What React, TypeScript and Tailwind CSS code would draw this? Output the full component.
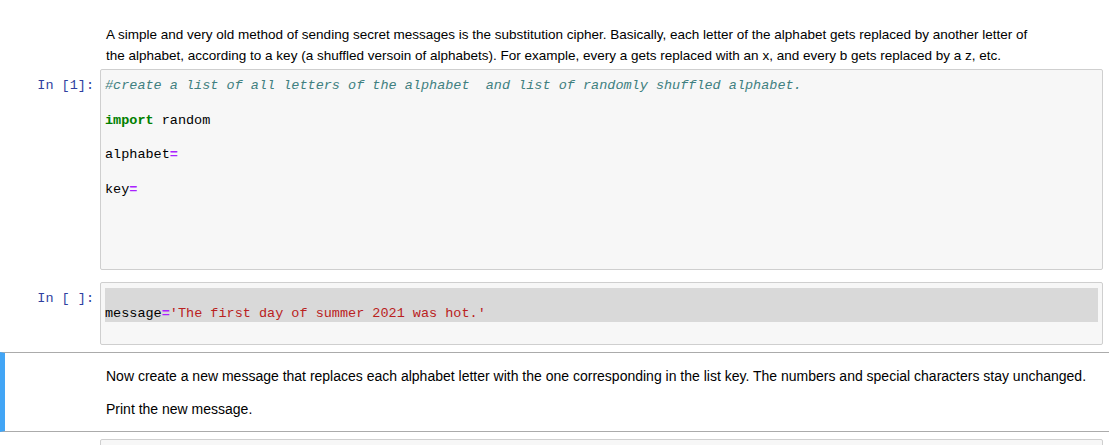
import React from "react";

const mono = "font-['Liberation_Mono',monospace] text-[13.5px] leading-[17.33px] whitespace-pre";

function Line({ children }: { children?: React.ReactNode }) {
  return <div className="h-[17.33px]">{children ?? "\u00a0"}</div>;
}

export default function App() {
  return (
    <div className="w-[1109px] h-[445px] overflow-hidden bg-white text-black font-['Liberation_Sans',Arial,sans-serif]">
      {/* markdown cell 1 */}
      <div className="pl-[106px] pr-[6px] pt-[24px] text-[13.5px] leading-[21px] whitespace-nowrap">
        <p>
          A simple and very old method of sending secret messages is the substitution cipher. Basically, each letter of the alphabet gets replaced by another letter of
          <br />
          the alphabet, according to a key (a shuffled versoin of alphabets). For example, every a gets replaced with an x, and every b gets replaced by a z, etc.
        </p>
      </div>

      {/* code cell 1 */}
      <div className="mt-[3px] flex">
        <div className={`w-[100px] shrink-0 pr-[6px] pt-[8px] text-right text-[#303f9f] ${mono}`}>In [1]:</div>
        <div className="w-[1003px] rounded-[2px] border border-[#cfcfcf] bg-[#f7f7f7] pl-[4px] pr-[4px] pt-[7px] pb-[1px]">
          <div className={mono}>
            <Line>
              <span className="italic text-[#408080]">#create a list of all letters of the alphabet  and list of randomly shuffled alphabet.</span>
            </Line>
            <Line />
            <Line>
              <span className="font-bold text-[#008000]">import</span> random
            </Line>
            <Line />
            <Line>
              alphabet<span className="font-bold text-[#aa22ff]">=</span>
            </Line>
            <Line />
            <Line>
              key<span className="font-bold text-[#aa22ff]">=</span>
            </Line>
            <Line />
            <Line />
            <Line />
            <Line />
          </div>
        </div>
      </div>

      {/* code cell 2 */}
      <div className="mt-[12px] flex">
        <div className={`w-[100px] shrink-0 pr-[6px] pt-[8px] text-right text-[#303f9f] ${mono}`}>In [ ]:</div>
        <div className="w-[1003px] rounded-[2px] border border-[#cfcfcf] bg-[#f7f7f7] pl-[4px] pr-[4px] pt-[5px] pb-[4px]">
          <div className={mono}>
            <div className="bg-[#d9d9d9]">
              <Line />
              <Line>
                message<span className="font-bold text-[#aa22ff]">=</span>
                <span className="text-[#ba2121]">'The first day of summer 2021 was hot.'</span>
              </Line>
            </div>
            <Line />
          </div>
        </div>
      </div>

      {/* selected markdown cell */}
      <div className="mt-[7px] border-y border-l-[5px] border-y-[#ababab] border-l-[#42a5f5] pl-[101px] pr-[6px] pt-[13px] pb-[12px] text-[14px] leading-[20px]">
        <p className="mb-[13px]">
          Now create a new message that replaces each alphabet letter with the one corresponding in the list key. The numbers and special characters stay unchanged.
        </p>
        <p>Print the new message.</p>
      </div>

      {/* next code cell */}
      <div className="mt-[7px] flex">
        <div className="w-[100px] shrink-0" />
        <div className="h-[60px] w-[1003px] rounded-[2px] border border-[#cfcfcf] bg-[#f7f7f7]" />
      </div>
    </div>
  );
}
